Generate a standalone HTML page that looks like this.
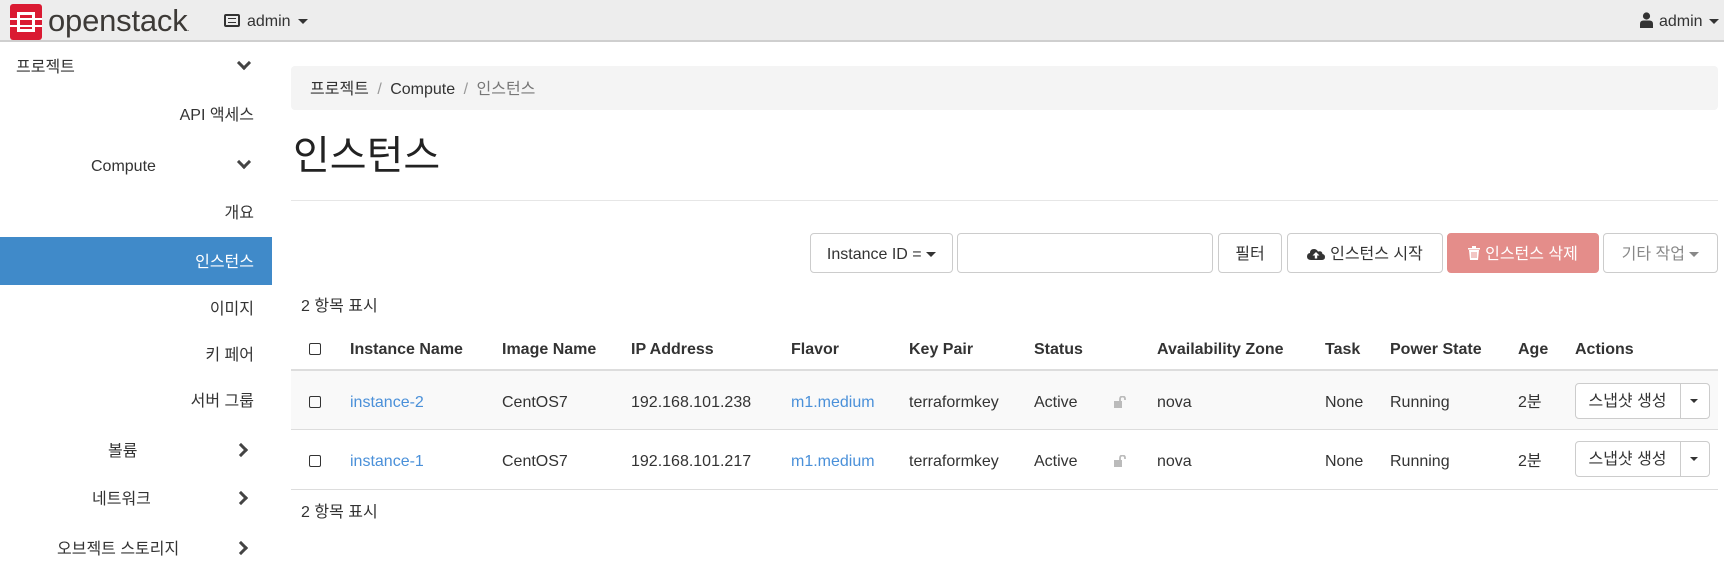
<!DOCTYPE html>
<html><head><meta charset="utf-8"><style>
*{box-sizing:border-box;margin:0;padding:0}
body{width:1724px;height:587px;overflow:hidden;background:#fff;font-family:"Liberation Sans","Noto Sans CJK KR",sans-serif;font-size:16px;color:#333;position:relative}
.a{position:absolute;white-space:nowrap}
.nav{position:absolute;left:0;top:0;width:1724px;height:42px;background:#ededed;border-bottom:2px solid #cfcfcf}
.sb{line-height:20px}
.r{text-align:right;right:1470px}
.chev{position:absolute;width:10px;height:10px;border-right:3px solid #444;border-bottom:3px solid #444}
.btn{position:absolute;top:233px;height:40px;border:1px solid #ccc;border-radius:4px;background:#fff;line-height:38px;padding-top:2px;text-align:center;font-size:16px}
.link{color:#4a90d9}
.cb{position:absolute;width:12px;height:12px;border:1.5px solid #333;border-radius:2px;left:309px}
</style></head><body>
<div class="nav"></div>
<div class="a" style="left:10px;top:4px;width:32px;height:36px;background:#da1a32;border-radius:3px"></div>
<div class="a" style="left:17px;top:12px;width:18px;height:20px;border:3px solid #fff"></div>
<div class="a" style="left:10px;top:18px;width:32px;height:2px;background:#fff"></div>
<div class="a" style="left:10px;top:25px;width:32px;height:2px;background:#fff"></div>
<div class="a" style="left:48px;top:0px;font-size:31px;color:#3d3a37;line-height:42px;letter-spacing:-0.2px">openstack<span style="font-size:7px">.</span></div>
<div class="a" style="left:224px;top:14px;width:16px;height:13px;border:2px solid #333;border-radius:2px"></div>
<div class="a" style="left:228px;top:18px;width:8px;height:5px;border-top:1px solid #333;border-bottom:1px solid #333"></div>
<div class="a" style="left:247px;top:10px;line-height:24px;font-size:16px">admin</div>
<div class="a" style="left:298px;top:19px;border-left:5px solid transparent;border-right:5px solid transparent;border-top:5px solid #333"></div>
<svg class="a" style="left:1640px;top:12px" width="13" height="16" viewBox="0 0 13 16"><circle cx="6.5" cy="4" r="3.6" fill="#333"/><path d="M0 16V12Q0 8.5 3.5 8.5H9.5Q13 8.5 13 12V16Z" fill="#333"/></svg>
<div class="a" style="left:1659px;top:10px;line-height:24px">admin</div>
<div class="a" style="left:1709px;top:19px;border-left:5px solid transparent;border-right:5px solid transparent;border-top:5px solid #333"></div>

<!-- sidebar -->
<div class="a sb" style="left:16px;top:58px">프로젝트</div>
<div class="chev" style="left:239px;top:58px;transform:rotate(45deg)"></div>
<div class="a sb r" style="top:106px">API 액세스</div>
<div class="a sb" style="left:91px;top:157px">Compute</div>
<div class="chev" style="left:239px;top:157px;transform:rotate(45deg)"></div>
<div class="a sb r" style="top:204px">개요</div>
<div class="a" style="left:0;top:237px;width:272px;height:48px;background:#408ac9"></div>
<div class="a sb r" style="top:253px;color:#fff">인스턴스</div>
<div class="a sb r" style="top:300px">이미지</div>
<div class="a sb r" style="top:346px">키 페어</div>
<div class="a sb r" style="top:392px">서버 그룹</div>
<div class="a sb" style="left:108px;top:442px">볼륨</div>
<div class="chev" style="left:236px;top:445px;transform:rotate(-45deg)"></div>
<div class="a sb" style="left:92px;top:490px">네트워크</div>
<div class="chev" style="left:236px;top:493px;transform:rotate(-45deg)"></div>
<div class="a sb" style="left:57px;top:540px">오브젝트 스토리지</div>
<div class="chev" style="left:236px;top:543px;transform:rotate(-45deg)"></div>

<!-- breadcrumb -->
<div class="a" style="left:291px;top:66px;width:1427px;height:44px;background:#f4f4f4;border-radius:4px"></div>
<div class="a" style="left:310px;top:80px;line-height:20px">프로젝트 <span style="color:#999;padding:0 4px">/</span> Compute <span style="color:#999;padding:0 4px">/</span> <span style="color:#777">인스턴스</span></div>
<div class="a" style="left:293px;top:131px;font-size:40px;line-height:50px;color:#222">인스턴스</div>
<div class="a" style="left:291px;top:200px;width:1427px;height:1px;background:#e6e6e6"></div>

<!-- toolbar -->
<div class="btn" style="left:810px;width:143px">Instance ID = <span style="display:inline-block;border-left:5px solid transparent;border-right:5px solid transparent;border-top:5px solid #333;vertical-align:middle"></span></div>
<div class="btn" style="left:957px;width:256px"></div>
<div class="btn" style="left:1218px;width:64px">필터</div>
<div class="btn" style="left:1287px;width:156px"><svg width="18" height="14" viewBox="0 0 18 14" style="vertical-align:-1px;margin-right:5px"><path d="M4 14Q0 14 0 10.5Q0 7.5 3 7Q3 3 7 3Q9.5 3 11 5.5Q15 4.5 15.5 8Q18 8.5 18 11Q18 14 14.5 14Z" fill="#333"/><path d="M9 6L5.5 9.5H7.8V12.5H10.2V9.5H12.5Z" fill="#fff"/></svg>인스턴스 시작</div>
<div class="btn" style="left:1447px;width:152px;background:#e48d8a;border-color:#e48d8a;color:#fff"><svg width="12" height="14" viewBox="0 0 12 14" style="vertical-align:-1px;margin-right:5px"><path d="M0 2H12V3.5H0ZM4 0H8V2H4ZM1 4H11L10 14H2Z" fill="#fff"/><path d="M4 6V12M6 6V12M8 6V12" stroke="#e48d8a" stroke-width="1"/></svg>인스턴스 삭제</div>
<div class="btn" style="left:1603px;width:115px;color:#888">기타 작업 <span style="display:inline-block;border-left:5px solid transparent;border-right:5px solid transparent;border-top:5px solid #888;vertical-align:middle"></span></div>

<div class="a" style="left:301px;top:297px;line-height:20px">2 항목 표시</div>

<!-- table -->
<div class="a" style="left:291px;top:369px;width:1427px;height:2px;background:#ddd"></div>
<div class="a" style="left:291px;top:371px;width:1427px;height:59px;background:#f9f9f9;border-bottom:1px solid #ddd"></div>
<div class="a" style="left:291px;top:430px;width:1427px;height:60px;border-bottom:1px solid #ddd"></div>
<div class="cb" style="top:343px"></div>
<div class="cb" style="top:396px"></div>
<div class="cb" style="top:455px"></div>
<div class="a" style="top:340px;left:0;line-height:20px;font-weight:bold;width:1724px">
<span class="a" style="left:350px">Instance Name</span><span class="a" style="left:502px">Image Name</span><span class="a" style="left:631px">IP Address</span><span class="a" style="left:791px">Flavor</span><span class="a" style="left:909px">Key Pair</span><span class="a" style="left:1034px">Status</span><span class="a" style="left:1157px">Availability Zone</span><span class="a" style="left:1325px">Task</span><span class="a" style="left:1390px">Power State</span><span class="a" style="left:1518px">Age</span><span class="a" style="left:1575px">Actions</span></div>

<div class="a" style="top:393px;left:0;line-height:20px;width:1724px">
<span class="a link" style="left:350px">instance-2</span><span class="a" style="left:502px">CentOS7</span><span class="a" style="left:631px">192.168.101.238</span><span class="a link" style="left:791px">m1.medium</span><span class="a" style="left:909px">terraformkey</span><span class="a" style="left:1034px">Active</span><span class="a" style="left:1157px">nova</span><span class="a" style="left:1325px">None</span><span class="a" style="left:1390px">Running</span><span class="a" style="left:1518px">2분</span></div>
<div class="a" style="top:452px;left:0;line-height:20px;width:1724px">
<span class="a link" style="left:350px">instance-1</span><span class="a" style="left:502px">CentOS7</span><span class="a" style="left:631px">192.168.101.217</span><span class="a link" style="left:791px">m1.medium</span><span class="a" style="left:909px">terraformkey</span><span class="a" style="left:1034px">Active</span><span class="a" style="left:1157px">nova</span><span class="a" style="left:1325px">None</span><span class="a" style="left:1390px">Running</span><span class="a" style="left:1518px">2분</span></div>
<svg class="a" style="left:1114px;top:396px" width="14" height="12" viewBox="0 0 14 12"><rect x="0" y="5" width="8" height="7" fill="#bbb"/><path d="M6 5V3Q6 0.5 8.5 0.5Q11 0.5 11 3V4" stroke="#bbb" stroke-width="1.8" fill="none"/></svg>
<svg class="a" style="left:1114px;top:455px" width="14" height="12" viewBox="0 0 14 12"><rect x="0" y="5" width="8" height="7" fill="#bbb"/><path d="M6 5V3Q6 0.5 8.5 0.5Q11 0.5 11 3V4" stroke="#bbb" stroke-width="1.8" fill="none"/></svg>

<div class="a" style="left:1575px;top:383px;width:135px;height:36px;border:1px solid #ccc;border-radius:4px;background:#fff"></div>
<div class="a" style="left:1680px;top:383px;width:1px;height:36px;background:#ccc"></div>
<div class="a" style="left:1575px;top:392px;width:105px;text-align:center;line-height:20px">스냅샷 생성</div>
<div class="a" style="left:1690px;top:399px;border-left:4px solid transparent;border-right:4px solid transparent;border-top:4px solid #333"></div>
<div class="a" style="left:1575px;top:441px;width:135px;height:36px;border:1px solid #ccc;border-radius:4px;background:#fff"></div>
<div class="a" style="left:1680px;top:441px;width:1px;height:36px;background:#ccc"></div>
<div class="a" style="left:1575px;top:450px;width:105px;text-align:center;line-height:20px">스냅샷 생성</div>
<div class="a" style="left:1690px;top:457px;border-left:4px solid transparent;border-right:4px solid transparent;border-top:4px solid #333"></div>

<div class="a" style="left:301px;top:503px;line-height:20px">2 항목 표시</div>
</body></html>
